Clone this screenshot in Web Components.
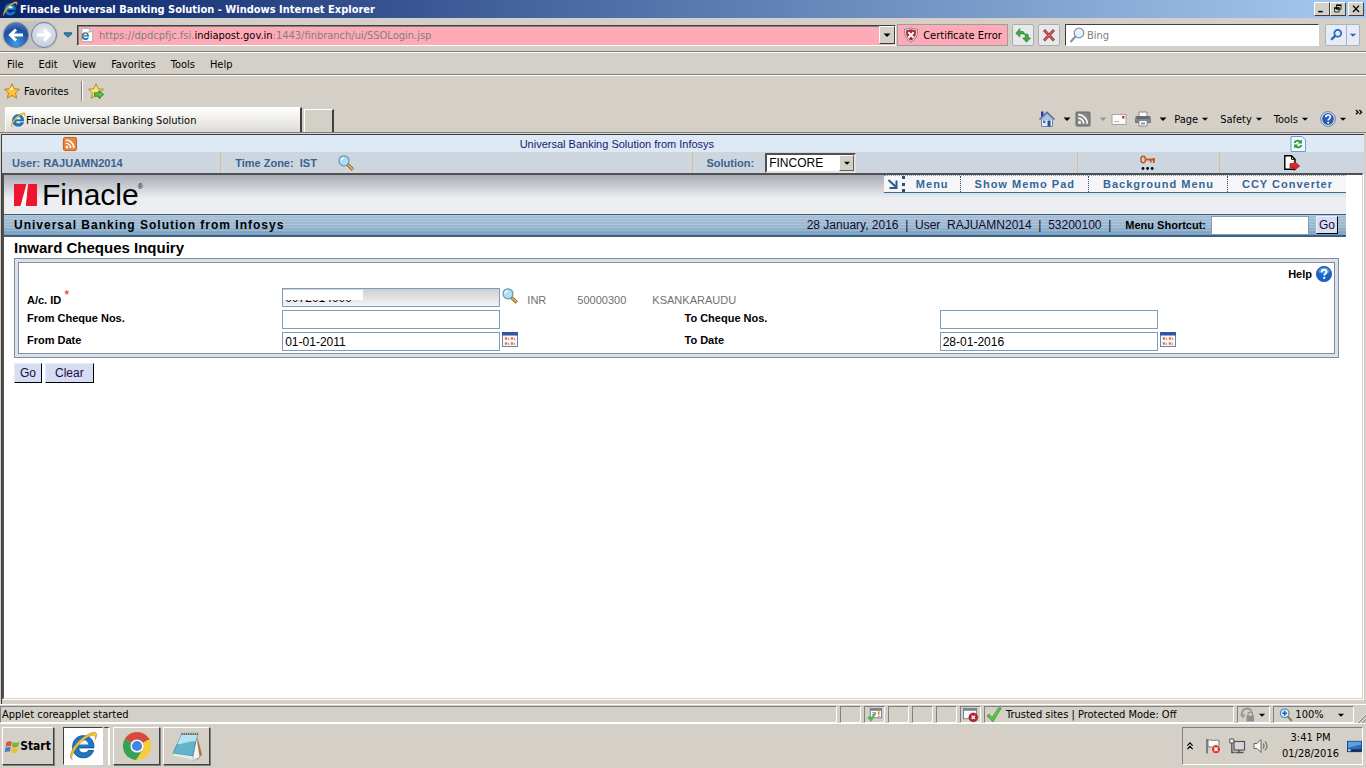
<!DOCTYPE html>
<html lang="en">
<head>
<meta charset="utf-8">
<title>Finacle Universal Banking Solution</title>
<style>
  html, body { margin: 0; }
  body {
    --face: #d4d0c8;
    --ui: "DejaVu Sans Condensed", "Noto Sans", sans-serif;
    --page: "Liberation Sans", Arial, sans-serif;
    font: 11px var(--ui);
    background: var(--face);
    color: #000;
  }
</style>
</head>
<body>
<browser-window></browser-window>

<script>
const base = `*{box-sizing:border-box}
button,input,select{font:inherit;color:inherit;margin:0}
button{border:0;padding:0;background:none;display:inline-flex;align-items:center;justify-content:center}
a{color:inherit;text-decoration:none}`;

function define(name, css, html) {
  const template = document.createElement('template');
  template.innerHTML = `<style>${base}${css}</style>${html}`;
  customElements.define(name, class extends HTMLElement {
    constructor() {
      super();
      this.attachShadow({ mode: 'open' }).append(template.content.cloneNode(true));
    }
  });
}

const icons = {
  ie: `<path d="M8.200 2.500c3.500 0 5.800 2.500 5.600 6.500H5.600c.2 1.900 1.300 2.700 2.700 2.700 1.200 0 2-.5 2.500-1.300h2.800c-.8 2.500-2.800 3.900-5.400 3.900-3.500 0-5.700-2.300-5.700-5.900 0-3.500 2.300-5.900 5.700-5.900z" fill="#1f78c4" stroke="#0d4f96" stroke-width=".5"/><path d="M5.700 7.200h5.100c-.2-1.500-1.100-2.300-2.500-2.300s-2.400.8-2.600 2.300z" fill="#eaf6ff"/><path d="M2.300 15.300C-.3 13.800 2.500 8.400 6.600 4.700 10.800 1 14.900-.3 15.300 1.600c.1.800-.2 1.800-.8 2.900.2-1.300 0-2.100-.8-2.200-1.800-.2-5.100 1.700-8 5.100-2.900 3.300-4.500 6.900-3.400 7.900z" fill="#f4c33a" stroke="#b98210" stroke-width=".3"/>`,
  page: `<path d="M2 .5h9l3.500 3.500v11.500H2z" fill="#fff" stroke="#9aa"/><path d="M11 .5V4h3.500" fill="#dde" stroke="#9aa"/><g transform="translate(0 3) scale(.75)"><path d="M8.200 2.500c3.500 0 5.800 2.500 5.600 6.500H5.600c.2 1.900 1.300 2.700 2.700 2.700 1.200 0 2-.5 2.500-1.300h2.800c-.8 2.500-2.800 3.900-5.400 3.900-3.500 0-5.700-2.300-5.700-5.900 0-3.500 2.300-5.900 5.700-5.900z" fill="#1f78c4"/><path d="M5.700 7.200h5.100c-.2-1.500-1.100-2.300-2.500-2.300s-2.400.8-2.600 2.300z" fill="#fff"/><path d="M2 15C0 13 3 8 7 5s8-4 8-2" fill="none" stroke="#e2a51e" stroke-width="1.500"/></g>`,
  down: `<path d="M4.500 6.500h7L8 10z" fill="currentColor"/>`,
  ddown: `<path d="M3 5h10v1.500L8 11 3 6.500z" fill="#2a86c0" stroke="#0d4a7c"/>`,
  shield: `<path d="M8 .7c2 1 4.500 1.500 6.500 1.500.3 6-1.500 10.500-6.500 13-5-2.500-6.800-7-6.500-13 2 0 4.500-.5 6.500-1.500z" fill="#d9d9dc" stroke="#8a8a90"/><path d="M8 2.300c1.600.8 3.300 1.100 5 1.200.1 4.700-1.300 8-5 10-3.700-2-5.100-5.300-5-10 1.700-.1 3.400-.4 5-1.200z" fill="#b3262b"/><path d="M5.300 5.300l5.400 5.400m0-5.400l-5.400 5.400" stroke="#fff" stroke-width="2"/>`,
  swap: `<path d="M.8 6.300L4.800 1.500v3h2.700c1 0 1.500.6 1.500 1.500v1H4.800v3z" fill="#44a844" stroke="#1d7420" stroke-width=".6"/><path d="M11.500 15.200L7.600 11h2.600V8.300c0-.8-.2-1.200-1.200-1.300h2.500c1.300 0 1.900.7 1.900 2V11h2.200z" fill="#44a844" stroke="#1d7420" stroke-width=".6"/>`,
  stop: `<path d="M3 3l10 10.500M13 3L3 13.500" stroke="#a8383c" stroke-width="2.800"/><path d="M3.500 3.500l9 9.500M12.500 3.500l-9 9.500" stroke="#d77a7c" stroke-width=".9"/>`,
  glass: `<circle cx="10" cy="6" r="4.800" fill="#e4f3fd" stroke="#8194a6" stroke-width="1.300"/><path d="M6.500 9.500L1.500 15" stroke="#8a8f96" stroke-width="2"/>`,
  glassblue: `<circle cx="10" cy="6" r="3.900" fill="#dcebfb" stroke="#2a63b4" stroke-width="2"/><path d="M7 9L2.500 13.500" stroke="#2a63b4" stroke-width="2.600"/>`,
  lookup: `<path d="M9.500 9.500l5.300 5" stroke="#8b5a1c" stroke-width="3.200"/><path d="M10 9.800l4.500 4.300" stroke="#eab765" stroke-width="1.600"/><circle cx="6" cy="5.800" r="5" fill="#a9e0f5" stroke="#6f93ad" stroke-width="1.200"/><path d="M3 5.500c.3-1.600 1.500-2.500 3-2.600" fill="none" stroke="#fff" stroke-width="1.300"/>`,
  star: `<path d="M8 .8l2.200 5 5.300.5-4 3.600 1.200 5.300L8 12.400l-4.700 2.800 1.200-5.300-4-3.600 5.300-.5z" fill="#fbc43a" stroke="#b97a10" stroke-width=".9"/><path d="M8 3l1.300 3.700L5 7z" fill="#fff0a8"/>`,
  staradd: `<path d="M8 .8l2.200 5 5.300.5-4 3.600 1.200 5.300L8 12.400l-4.700 2.800 1.200-5.300-4-3.600 5.300-.5z" fill="#fbe07a" stroke="#b98a20" stroke-width="1"/><path d="M6.500 9.800H11V7.500l4.700 4-4.700 4v-2.300H6.500z" fill="#58c14c" stroke="#1f7a1c" stroke-width=".8"/>`,
  home: `<path d="M2.500 8h11v7.500h-11z" fill="#e3ebf7" stroke="#7286a8"/><path d="M.5 8.500L8 1.300l7.500 7.200" fill="#aebfdd" stroke="#5870a2" stroke-width="1.600"/><path d="M2 .5h2.500V4L2 6z" fill="#2a3c9a"/><path d="M8.500 9.500h3v6h-3z" fill="#20559c"/><path d="M4 9.500h2.500V12H4z" fill="#4c6fae"/>`,
  rssgrey: `<rect x="1" y="1" width="14" height="14" rx="1" fill="#858585" stroke="#666"/><circle cx="4.600" cy="11.500" r="1.400" fill="#fff"/><path d="M3.300 7.200a5.500 5.500 0 015.500 5.500M3.300 3.700a9 9 0 019 9" fill="none" stroke="#fff" stroke-width="1.700"/>`,
  rss: `<rect x=".5" y=".5" width="15" height="15" rx="2" fill="#e8863a" stroke="#b35c16"/><circle cx="4.600" cy="11.500" r="1.500" fill="#fff"/><path d="M3.200 7.200a5.500 5.500 0 015.500 5.500M3.200 3.500a9.200 9.200 0 019.200 9.200" fill="none" stroke="#fff" stroke-width="1.800"/>`,
  mail: `<rect x="1" y="3.500" width="14" height="10" fill="#fafafa" stroke="#a3a3a3"/><path d="M11 5h2.500v2.500H11z" fill="#d33"/><path d="M3 10.500h5" stroke="#bbb"/>`,
  print: `<path d="M4 1h8v5H4z" fill="#fff" stroke="#888"/><path d="M1 5.500h14l.5 6H.5z" fill="#85888c" stroke="#5c5f62" stroke-width=".8"/><path d="M2 7h12" stroke="#46494c"/><path d="M4 9.500h8V15H4z" fill="#fff" stroke="#888"/><path d="M6 11.500h4v2H6z" fill="#5d9fc4"/>`,
  help: `<circle cx="8" cy="8" r="7.400" fill="#dfe7f3" stroke="#6b7fa5"/><circle cx="8" cy="8" r="5.900" fill="#2a5cb5"/><path d="M5.700 6.300C5.800 4.600 6.800 4 8.100 4c1.400 0 2.300.8 2.300 2 0 1.600-2.200 1.700-2.200 3.500" fill="none" stroke="#fff" stroke-width="1.700"/><circle cx="8.200" cy="11.700" r="1" fill="#fff"/>`,
  helpblue: `<circle cx="8" cy="8" r="7.700" fill="#1d62c8" stroke="#0d3f92" stroke-width=".6"/><path d="M2 6a6.300 6.300 0 0112 0c-3 2-9 2-12 0z" fill="#59a3ee" opacity=".8"/><path d="M5.600 6.200C5.700 4.500 6.700 3.800 8.100 3.800c1.500 0 2.400.8 2.400 2.100 0 1.700-2.300 1.800-2.300 3.600" fill="none" stroke="#fff" stroke-width="1.900"/><circle cx="8.200" cy="11.900" r="1.100" fill="#fff"/>`,
  chevrons: `<path d="M4.500 4.500L7 7 4.500 9.500M8.500 4.500L11 7 8.500 9.500" fill="none" stroke="#000" stroke-width="1.500"/>`,
  chevup: `<path d="M5 7.500L8 4.500l3 3M5 11.500l3-3 3 3" fill="none" stroke="#000" stroke-width="1.400"/>`,
  refresh: `<path d="M1 .5h11l3.500 3.500v11.500H1z" fill="#f4f9ff" stroke="#6d9bd3"/><path d="M3.700 7c.6-2.200 2-3.200 4-3.200 1.100 0 2 .3 2.700 1l1.500-1.300v4H8l1-1.200c-.4-.5-.9-.7-1.500-.7-.9 0-1.500.4-1.900 1.400z" fill="#1fa32c"/><path d="M12.300 9c-.6 2.200-2 3.200-4 3.200-1.100 0-2-.3-2.700-1l-1.500 1.300v-4H8L7 9.700c.4.500.9.700 1.500.7.900 0 1.500-.4 1.900-1.400z" fill="#1fa32c"/>`,
  key: `<ellipse cx="3.200" cy="4.500" rx="2.300" ry="3.300" fill="none" stroke="#c65a1e" stroke-width="1.500"/><path d="M5.500 4.500h9.500M10.800 5v2.500M13.800 3v5" stroke="#c65a1e" stroke-width="1.800"/><circle cx="3" cy="13.500" r="1.400"/><circle cx="7.600" cy="13.500" r="1.400"/><circle cx="12.200" cy="13.500" r="1.400"/>`,
  exit: `<path d="M.8.800h6.700l3.500 3.500v9.900H.8z" fill="#fff" stroke="#000" stroke-width="1.400"/><path d="M7.500.8v3.500H11" fill="none" stroke="#000"/><path d="M6 8.500h4V6l5.700 5-5.700 4.700V13H6z" fill="#d92a25" stroke="#7c0d0b" stroke-width=".6"/>`,
  cal: `<rect x=".5" y=".5" width="15" height="14" fill="#f5f5fb" stroke="#6b84b8"/><path d="M0 0h16v3.500H0z" fill="#2f55a8"/><path d="M3 5.500h2v2H3zM6 6.500h1v1H6zM9 5.500h2v2H9zM12 6.500h1v1h-1zM3 10.500h2v2H3zM6 11.500h1v1H6zM9 10.500h2v2H9zM12 11.500h1v1h-1z" fill="#df7a3f" stroke="#df7a3f" stroke-width=".4"/>`,
  goarrow: `<path d="M3.500 4l7 6.500M11.500 4.500V12H4.500" fill="none" stroke="#2b5c91" stroke-width="2"/>`,
  check: `<path d="M1 9l2-2 3 3.500L12.500.8 15.300 1 7 15z" fill="#5cc24a" stroke="#2e8f27" stroke-width=".6"/>`,
  popup: `<rect x="3.500" y="1.500" width="12" height="10" fill="#fbfbfb" stroke="#77808a"/><path d="M3.500 3h12" stroke="#77808a" stroke-width="2"/><path d="M5.500 6h4M5.500 8h3" stroke="#999"/><path d="M12.500 4.500V8M12.500 9v1.500" stroke="#e07a1c" stroke-width="1.600"/><path d="M.8 11.500l1.600-1.300 1.600 2L8 6.500l1.500.5-5.200 8.300z" fill="#5cc24a" stroke="#2e8f27" stroke-width=".5"/>`,
  blocked: `<rect x=".5" y="1.500" width="14" height="11" fill="#fbfbfb" stroke="#77808a"/><path d="M.5 3h14" stroke="#77808a" stroke-width="2"/><circle cx="11" cy="11" r="4.700" fill="#b5242a" stroke="#7d1418" stroke-width=".6"/><path d="M9.200 9.200l3.600 3.600m0-3.600l-3.600 3.600" stroke="#fff" stroke-width="1.500"/>`,
  lock: `<path d="M4 9.500A5 5 0 018 1.500c2.500 0 4 1.500 4.500 3" fill="none" stroke="#9a9a9a" stroke-width="2"/><path d="M.8 7.500l3 4 3-4z" fill="#9a9a9a"/><path d="M7.500 8.500h7.500v6H7.500z" fill="#8f8f8f"/><path d="M9 8.500V7c0-2.500 4.500-2.500 4.500 0v1.500" fill="none" stroke="#8f8f8f" stroke-width="1.200"/>`,
  zoom: `<path d="M9.800 9.800l4.900 5" stroke="#9a7a52" stroke-width="2.400"/><circle cx="6.500" cy="6" r="4.900" fill="#e0f0fb" stroke="#4a86b8" stroke-width="1.300"/><path d="M3.700 6h5.600M6.500 3.200v5.600" stroke="#1c62b0" stroke-width="1.900"/>`,
  grip: `<path d="M3 16L16 3M8 16l8-8M13 16l3-3" stroke="#808080" stroke-width="1.600"/><path d="M1.500 16L16 1.500M6.500 16l9.500-9.500" stroke="#fff"/>`,
  flag: `<path d="M2 1v14.500" stroke="#6b6b6b" stroke-width="1.600"/><path d="M3 2c2-1 4 1 5.500.5 2-.7 4-.2 5.500 0V9c-2-.5-4-.5-5.500 0S5 8.500 3 9z" fill="#fafafa" stroke="#777"/><circle cx="11" cy="11.300" r="4.500" fill="#d63a2b" stroke="#fff" stroke-width=".6"/><path d="M9.300 9.600l3.400 3.400m0-3.400L9.300 13" stroke="#fff" stroke-width="1.400"/>`,
  net: `<rect x="5" y="3.500" width="10.500" height="8.500" fill="#d5d8da" stroke="#555" stroke-width="1.200"/><path d="M6.500 14.500h8M10 12v2.500" stroke="#555" stroke-width="1.500"/><path d="M.8 1h4v4h-4z" fill="#f4f4f4" stroke="#555"/><path d="M2.800 5v9.500h3" fill="none" stroke="#555" stroke-width="1.400"/>`,
  sound: `<path d="M1 5.500h3L8 1.500v13l-4-4H1z" fill="#f8f8f8" stroke="#666"/><path d="M10 5.500c1.300 1.500 1.300 3.500 0 5M12 3.500c2.500 2.700 2.500 6.300 0 9" fill="none" stroke="#777" stroke-width="1.200"/>`,
  desk: `<rect x=".5" y="2.500" width="15" height="11" fill="#2a6cc0" stroke="#1b3f78"/><path d="M1 3h14v3C10 6 6 9 1 9z" fill="#5ba0e6"/><path d="M.5 11h15v2.500H.5z" fill="#162c52"/><path d="M1 11h3v2H1z" fill="#bcd6f2"/>`,
  windows: `<path d="M1.500 3.500C3.500 2 5.500 2 7.300 3L6.300 8C4.500 7.200 2.800 7.200.5 8.500z" fill="#e0562b"/><path d="M8.300 3.300c2 1 4.200.9 6.700-.3l-1 5.300c-2.300 1-4.500 1-6.700 0z" fill="#78b43a"/><path d="M.3 9.500c2.200-1.200 4-1.200 5.800-.5l-1 4.700C3.500 13 1.800 13-.3 14.200z" fill="#3c7fd0"/><path d="M7.100 9.300c2.200 1 4.400 1 6.700 0l-1.100 5c-2.200 1-4.400.9-6.500-.1z" fill="#f4bd2c"/>`,
  chrome: `<circle cx="8" cy="8" r="7.500" fill="#f5cc3a"/><path d="M8 8L1.500 4.250A7.500 7.500 0 018 .5a7.500 7.500 0 016.500 3.750z" fill="#d64a3e"/><path d="M8 8L1.500 4.250A7.500 7.500 0 007.500 15.500L11 9.700z" fill="#35a057"/><path d="M8 4.250h6.500" stroke="#d64a3e"/><circle cx="8" cy="8" r="3.500" fill="#fff"/><circle cx="8" cy="8" r="2.700" fill="#4285ea"/>`,
  notepad: `<path d="M13.500 3L16 12.500l-2.500 3z" fill="#a6753b"/><path d="M13 2.500l1.800 11.500-3.800 1.700z" fill="#f4f4f0" stroke="#999" stroke-width=".3"/><path d="M5 2h8.500L11 13.500.5 12z" fill="#62b4cb" stroke="#3f8296" stroke-width=".4"/><path d="M5 2h8.500l-.8 3.500C9 5 6 7 2.800 7z" fill="#b5e2ee"/><path d="M.5 12L11 13.500v2L.7 13z" fill="#dfe8ea"/><path d="M5 1.500h9" stroke="#666" stroke-width="1.200" stroke-dasharray=".7 .5"/>`,
  min: `<path d="M3 11.500h6" stroke="#000" stroke-width="2"/>`,
  restore: `<path d="M6 3h6v5.500h-6zM3.500 6.500h6V12h-6z" fill="#d4d0c8" stroke="#000"/><path d="M5.500 3h7M3 6.500h7" stroke="#000" stroke-width="2"/>`,
  close: `<path d="M4 3.500l8 8.500M12 3.500L4 12" stroke="#000" stroke-width="1.800"/>`
};

customElements.define('ui-icon', class extends HTMLElement {
  constructor() {
    super();
    this.attachShadow({ mode: 'open' });
  }
  connectedCallback() {
    const size = this.getAttribute('size') || 16;
    this.shadowRoot.innerHTML = `<style>:host{display:block;flex:none;width:${size}px;height:${size}px}svg{display:block;overflow:visible}</style>
      <svg width="${size}" height="${size}" viewBox="0 0 16 16" aria-hidden="true">${icons[this.getAttribute('name')]}</svg>`;
  }
});

define('title-bar', `
:host{display:flex;align-items:center;height:18px;padding:0 2px;gap:2px;color:#fff;font-weight:bold;
 background:linear-gradient(90deg,#0a246a,#a6caf0)}
.t{flex:1;white-space:nowrap}
.b{display:flex}
button{width:16px;height:14px;background:var(--face);border:1px solid;border-color:#fff #404040 #404040 #fff}`, `
<ui-icon name="ie"></ui-icon><span class="t">Finacle Universal Banking Solution - Windows Internet Explorer</span>
<span class="b"><button aria-label="Minimize"><ui-icon name="min" size="12"></ui-icon></button><button aria-label="Restore"><ui-icon name="restore" size="12"></ui-icon></button></span>
<button aria-label="Close"><ui-icon name="close" size="12"></ui-icon></button>`);

define('address-bar', `
:host{display:flex;align-items:center;height:35px;padding:0 6px 0 2px;border-bottom:1px solid #fff;box-shadow:inset 0 -1px #808080}
.nav{display:flex;gap:2px;padding:1px;border-radius:14px;background:#c3c2c0}
.nav button{width:26px;height:26px;border-radius:50%;border:1px solid #6e7f99}
.back{background:radial-gradient(circle at 50% 85%,#3f9be8,#1b4d9c 60%,#6c93c8)}
.fwd{background:radial-gradient(circle at 50% 40%,#e9edf3,#b9c3d2)}
.hist{width:19px}
.url{flex:1;display:flex;align-items:center;height:21px;background:#ffabb7;border:1px solid;border-color:#404040 #fff #fff #404040;box-shadow:inset 1px 1px #808080;gap:5px;padding-left:2px}
.url a{flex:1;color:#808080;white-space:nowrap}
.url b{font-weight:normal;color:#000}
.dd{width:16px;height:18px;background:var(--face);border:1px solid;border-color:#fff #404040 #404040 #fff}
.cert{width:111px;height:22px;margin:0 4px 0 1px;background:#ffabb7;border:1px solid #a09aa6;gap:4px}
.sq{width:22px;height:22px;border:1px solid #a9acb4;border-radius:2px;background:#e8e9ec;margin-right:4px}
.search{display:flex;align-items:center;width:254px;height:22px;margin:0 6px 0 1px;background:#fff;border:1px solid;border-color:#404040 #fff #fff #404040;padding-left:3px}
.search input{flex:1;min-width:0;border:0;outline:0;padding:0 2px;background:none}
.search input::placeholder{color:#808080;opacity:1}
.go{display:flex;border:1px solid #a9b4c8;border-radius:2px;background:#e6ebf5;height:22px}
.go button{width:20px}.go button+button{width:13px;border-left:1px solid #a9b4c8;color:#2a63b4}`, `
<div class="nav"><button class="back" aria-label="Back"><svg width="18" height="18" viewBox="0 0 18 18"><path d="M16 9H4M9 3.500L3.500 9 9 14.500" fill="none" stroke="#fff" stroke-width="3"/></svg></button><button class="fwd" aria-label="Forward"><svg width="18" height="18" viewBox="0 0 18 18"><path d="M2 9h12M9 3.500l5.500 5.500L9 14.500" fill="none" stroke="#fff" stroke-width="3"/></svg></button></div>
<button class="hist" aria-label="Recent pages"><ui-icon name="ddown" size="12"></ui-icon></button>
<div class="url"><ui-icon name="page" size="14"></ui-icon><a href="#">https://dpdcpfjc.fsi.<b>indiapost.gov.in</b>:1443/finbranch/ui/SSOLogin.jsp</a><button class="dd" aria-label="Addresses"><ui-icon name="down"></ui-icon></button></div>
<button class="cert"><ui-icon name="shield"></ui-icon>Certificate Error</button>
<button class="sq" aria-label="Refresh"><ui-icon name="swap"></ui-icon></button>
<button class="sq" aria-label="Stop"><ui-icon name="stop"></ui-icon></button>
<div class="search"><ui-icon name="glass"></ui-icon><input aria-label="Search" placeholder="Bing"></div>
<div class="go"><button aria-label="Search"><ui-icon name="glassblue" size="14"></ui-icon></button><button aria-label="Search options"><ui-icon name="down" size="14"></ui-icon></button></div>`);

define('menu-bar', `
:host{display:flex;align-items:center;gap:15px;height:23px;padding:0 7px;border-bottom:1px solid #fff;box-shadow:inset 0 -1px #808080}`, `
<a href="#">File</a><a href="#">Edit</a><a href="#">View</a><a href="#">Favorites</a><a href="#">Tools</a><a href="#">Help</a>`);

define('favorites-bar', `
:host{display:flex;align-items:center;height:30px;padding:0 4px}
button{gap:4px}
.sep{width:2px;height:20px;margin:0 5px 0 12px;background:#808080;border-right:1px solid #fff}`, `
<button><ui-icon name="star"></ui-icon>Favorites</button><span class="sep"></span><button aria-label="Add to favorites"><ui-icon name="staradd"></ui-icon></button>`);

define('tab-bar', `
:host{display:flex;align-items:flex-end;height:27px;padding-left:5px;border-bottom:1px solid #808080}
.tab{display:flex;align-items:center;width:297px;height:25px;padding-left:4px;background:linear-gradient(#fff,#dedbd5);border:1px solid;border-color:#fff #404040 transparent #fff;border-bottom:0;border-right-width:2px}
.new{width:30px;height:23px;margin-left:2px;border:1px solid;border-color:#fff #404040 transparent #fff;border-bottom:0;border-right-width:2px}
nav{display:flex;align-items:center;height:26px;margin-left:auto}
nav button{white-space:nowrap}
nav button+button{margin-left:8px}
nav .print{margin-right:3px}
nav .a{width:12px;margin:0 -4px 0 4px}
nav .off{color:#999}
nav button.chev{align-self:flex-start;margin-left:2px}`, `
<a class="tab" href="#"><ui-icon name="ie"></ui-icon>Finacle Universal Banking Solution</a><button class="new" aria-label="New tab"></button>
<nav><button aria-label="Home"><ui-icon name="home"></ui-icon><ui-icon class="a" name="down"></ui-icon></button>
<button aria-label="Feeds"><ui-icon name="rssgrey"></ui-icon><ui-icon class="a off" name="down"></ui-icon></button>
<button aria-label="Read mail"><ui-icon name="mail"></ui-icon></button>
<button class="print" aria-label="Print"><ui-icon name="print"></ui-icon><ui-icon class="a" name="down"></ui-icon></button>
<button>Page<ui-icon name="down" size="14"></ui-icon></button>
<button>Safety<ui-icon name="down" size="14"></ui-icon></button>
<button>Tools<ui-icon name="down" size="14"></ui-icon></button>
<button aria-label="Help"><ui-icon name="help"></ui-icon><ui-icon name="down" size="14"></ui-icon></button>
<button class="chev" aria-label="More"><ui-icon name="chevrons" size="14"></ui-icon></button></nav>`);

define('portal-header', `
:host{display:block;font-family:var(--page)}
.top{display:grid;grid-template-columns:136fr 956fr 136fr 132fr;align-items:center;justify-items:center;height:17px;background:#dde9f5;color:#191970}
.top>:last-child{grid-column:4}
.row{display:grid;grid-template-columns:218fr 471fr 385fr 142fr 145fr;height:21px;background:#cdd6de;color:#3a628f;font-weight:bold}
.row>div{display:flex;align-items:center;padding-left:14px;white-space:nowrap}
.row>div:first-child{padding-left:10px}
.row>div+div{border-left:1px solid #e0bd8c}
.row>.c{justify-content:center;padding:0}
.look{margin-left:21px}
.sel{position:relative;width:91px;height:20px;margin-left:11px}
select{appearance:none;width:100%;height:20px;font:12px var(--page);color:#000;background:#fff;border:2px solid;border-color:#505050 #e4e2dd #e4e2dd #505050;border-radius:0;padding:0 2px}
.arr{position:absolute;right:2px;top:2px;width:15px;height:16px;display:flex;align-items:center;justify-content:center;color:#000;background:var(--face);border:1px solid;border-color:#fff #606060 #606060 #fff;pointer-events:none}`, `
<div class="top"><ui-icon name="rss" size="14"></ui-icon><span>Universal Banking Solution from Infosys</span><ui-icon name="refresh"></ui-icon></div>
<div class="row"><div>User: RAJUAMN2014</div><div>Time Zone:&nbsp; IST<button class="look" aria-label="Find time zone"><ui-icon name="lookup"></ui-icon></button></div>
<div><label for="s">Solution:</label><span class="sel"><select id="s"><option>FINCORE</option></select><span class="arr"><ui-icon name="down" size="14"></ui-icon></span></span></div>
<div class="c"><button aria-label="Change password"><ui-icon name="key"></ui-icon></button></div><div class="c"><button aria-label="Log out"><ui-icon name="exit"></ui-icon></button></div></div>`);

define('finacle-header', `
:host{display:block;margin-right:16px;font-family:var(--page)}
.brand{display:flex;justify-content:space-between;height:39px;padding-left:10px;background:linear-gradient(#a9acb6,#eceef1 60%,#eceef1)}
.logo{display:flex;align-items:center;gap:5px;font-size:30px;line-height:32px}
.logo sup{align-self:flex-start;font-size:7px;line-height:8px;margin:8px 0 0 -6px}
nav{display:flex;height:18px;background:#f6f6f8;border-top:1px dotted #8a9bb0;border-bottom:1px solid #2f6f9c;color:#336699;font-weight:bold;letter-spacing:1px}
nav a{display:flex;align-items:center;padding:0 13px 0 14px;border-left:1px dotted #2b4f78;white-space:nowrap}
nav a:first-child{padding:0 1px;border:0}
nav a:nth-child(2){border-left-width:3px;padding:0 11px}
.band{display:flex;align-items:center;height:23px;padding:0 8px 0 10px;border-top:1px solid #3f5d79;border-bottom:2px solid #41607c;font-size:12px;
 background:repeating-linear-gradient(rgba(255,255,255,.16) 0 1px,transparent 1px 3px),linear-gradient(#a6bfd4,#9ab7d0 60%,#6f9bc0)}
.band b{flex:1;letter-spacing:1px}
.info{white-space:pre;color:#14082e;margin-right:14px}
label{font-weight:bold;font-size:11px;margin-right:5px}
input{width:98px;height:19px;border:1px solid #7f9db9;background:#fff;border-radius:0;padding:0 2px}
button{width:22px;height:18px;margin-left:7px;background:#d6def2;border:1px solid;border-color:#eef #000 #000 #eef;color:#1a0a3a}`, `
<div class="brand"><div class="logo"><svg width="23" height="22" viewBox="0 0 23 22"><path d="M0 0h23v22H0z" fill="#f0142d"/><path d="M12.500 0h2L12 22H6.500z" fill="#fff"/><path d="M14 0h1l-1.500 22H12z" fill="#f0142d"/></svg>Finacle<sup>®</sup></div>
<nav><a href="#" aria-label="Collapse"><ui-icon name="goarrow"></ui-icon></a><a href="#">Menu</a><a href="#">Show Memo Pad</a><a href="#">Background Menu</a><a href="#">CCY Converter</a></nav></div>
<div class="band"><b>Universal Banking Solution from Infosys</b><span class="info">28 January, 2016  |  User  RAJUAMN2014  |  53200100  |</span><label for="m">Menu Shortcut:</label><input id="m"><button>Go</button></div>`);

customElements.define('form-field', class extends HTMLElement {
  constructor() {
    super();
    this.attachShadow({ mode: 'open' });
  }
  connectedCallback() {
    const required = this.hasAttribute('required');
    this.shadowRoot.innerHTML = `<style>${base}
:host{display:grid;grid-template-columns:minmax(0,263fr) minmax(0,218fr) minmax(0,176fr);align-items:start;height:19px}
label{font-weight:bold;line-height:17px;padding-left:8px}
:host([required]) label{padding-top:3px}
sup{color:#d22;font-size:13px;line-height:8px;font-weight:normal}
.box{position:relative}
input{display:block;width:100%;height:19px;padding:0 2px;font-size:12px;border:1px solid #7f9db9;border-radius:0;background:#fff}
:host([required]) input{background:linear-gradient(#cfcfd3,#f4f4f5)}
.mask{position:absolute;left:1px;top:2px;width:80px;height:10px;background:#fff}
.after{display:flex;align-items:flex-start;padding-left:2px}</style>
<label for="f">${this.getAttribute('label')}${required ? ' <sup>*</sup>' : ''}</label>
<div class="box"><input id="f" value="${this.getAttribute('value') || ''}">${required ? '<span class="mask"></span>' : ''}</div>
<div class="after"><slot></slot></div>`;
  }
});

define('inquiry-form', `
:host{display:block;padding:0 23px 0 10px;font-family:var(--page)}
h1{margin:0;font-size:15px;line-height:21px}
.outer{border:1px solid #828d9e;background:#dae1ee;padding:3px}
.inner{border:1px solid #828d9e;background:#fff;padding:2px 0}
.help{display:flex;justify-content:flex-end;align-items:center;gap:4px;height:18px;padding-right:2px;font-weight:bold}
.grid{display:grid;grid-template-columns:1fr 1fr;row-gap:3px;margin-top:5px}
.wide{grid-column:1}
.info{display:grid;grid-template-columns:50px 75px 90px;align-content:center;height:24px;margin-left:9px;color:#707070;white-space:nowrap}
.btns{display:flex;gap:3px;margin-top:5px}
.btns button{height:20px;padding:0 5px;font-size:12px;background:#d5dcf3;border:1px solid;border-color:#e8ecfa #000 #000 #e8ecfa;color:#1a0a3a}
.btns button+button{padding:0 9px}`, `
<h1>Inward Cheques Inquiry</h1>
<div class="outer"><div class="inner"><a class="help" href="#">Help <ui-icon name="helpblue"></ui-icon></a>
<div class="grid">
<form-field class="wide" required label="A/c. ID" value="0072014000"><button aria-label="Find account"><ui-icon name="lookup"></ui-icon></button><div class="info"><span>INR</span><span>50000300</span><span>KSANKARAUDU</span></div></form-field>
<form-field class="wide" label="From Cheque Nos."></form-field><form-field label="To Cheque Nos."></form-field>
<form-field class="wide" label="From Date" value="01-01-2011"><button aria-label="Pick from date"><ui-icon name="cal"></ui-icon></button></form-field><form-field label="To Date" value="28-01-2016"><button aria-label="Pick to date"><ui-icon name="cal"></ui-icon></button></form-field>
</div></div></div>
<div class="btns"><button>Go</button><button>Clear</button></div>`);

define('page-frame', `
:host{display:flex;flex-direction:column;flex:1;margin:1px 2px 0 1px;border-top:1px solid #404040;border-left:1px solid #404040}
.in{flex:1;background:#fff;border-top:2px solid #505050;border-left:2px solid #505050;border-right:1px solid #d4d0c8;border-bottom:1px solid #d4d0c8;box-shadow:1px 1px #fff;margin-right:1px;margin-bottom:5px}`, `
<slot name="head"></slot><div class="in"><slot></slot></div>`);

define('status-bar', `
:host{display:flex;gap:3px;height:20px;padding-top:1px;border-top:1px solid #fff;border-bottom:1px solid #fff}
div{display:flex;align-items:center;justify-content:center;width:21px;border:1px solid;border-color:#808080 #fff #fff #808080;white-space:nowrap}
.msg{flex:1;width:auto;justify-content:flex-start;padding-left:1px}
.zone{width:250px;justify-content:flex-start;gap:4px;padding-left:1px}
.p{width:33px}.z{width:81px;gap:2px}.z ui-icon:last-child{margin-left:8px}
.grip{width:9px;border:0;align-items:flex-end}`, `
<div class="msg">Applet coreapplet started</div><div></div><div><ui-icon name="popup" size="15"></ui-icon></div><div></div><div></div><div></div><div><ui-icon name="blocked" size="15"></ui-icon></div>
<div class="zone"><ui-icon name="check"></ui-icon>Trusted sites | Protected Mode: Off</div><div class="p"><ui-icon name="lock"></ui-icon><ui-icon name="down" size="14"></ui-icon></div><div class="z"><ui-icon name="zoom" size="14"></ui-icon>100%<ui-icon name="down" size="14"></ui-icon></div><div class="grip"><ui-icon name="grip" size="12"></ui-icon></div>`);

define('task-bar', `
:host{display:flex;align-items:center;height:44px;padding:0 3px 0 2px}
button{height:38px;background:var(--face);border:1px solid;border-color:#fff #404040 #404040 #fff;box-shadow:1px 1px #808080}
.start{width:52px;font-weight:bold;font-size:12px;margin-right:9px}
.app{width:47px;margin-right:3px}
.on{width:40px;margin:0;background:#fff;border-color:#404040 #fff #fff #404040;box-shadow:none}
.stack{width:7px;height:38px;margin-right:3px;border:solid #fff;border-width:0 2px;border-left-color:#d4d0c8;border-top:1px solid #404040}
.tray{display:flex;align-items:center;gap:8px;margin-left:auto;width:181px;height:38px;justify-content:flex-end;border:1px solid;border-color:#808080 #fff #fff #808080}
time{text-align:center;line-height:16px;margin-left:5px}`, `
<button class="start"><ui-icon name="windows" size="15"></ui-icon>Start</button>
<button class="app on" aria-label="Internet Explorer"><ui-icon name="ie" size="30"></ui-icon></button><span class="stack"></span>
<button class="app" aria-label="Chrome"><ui-icon name="chrome" size="30"></ui-icon></button>
<button class="app" aria-label="Notepad"><ui-icon name="notepad" size="30"></ui-icon></button>
<div class="tray"><ui-icon name="chevup" size="14"></ui-icon><ui-icon name="flag"></ui-icon><ui-icon name="net"></ui-icon><ui-icon name="sound"></ui-icon><time>3:41 PM<br>01/28/2016</time><ui-icon name="desk" size="15"></ui-icon></div>`);

define('browser-window', `
:host{display:flex;flex-direction:column;min-height:100vh}`, `
<title-bar></title-bar><address-bar></address-bar><menu-bar></menu-bar><favorites-bar></favorites-bar><tab-bar></tab-bar>
<page-frame><portal-header slot="head"></portal-header><finacle-header></finacle-header><inquiry-form></inquiry-form></page-frame>
<status-bar></status-bar><task-bar></task-bar>`);
</script>
</body>
</html>
